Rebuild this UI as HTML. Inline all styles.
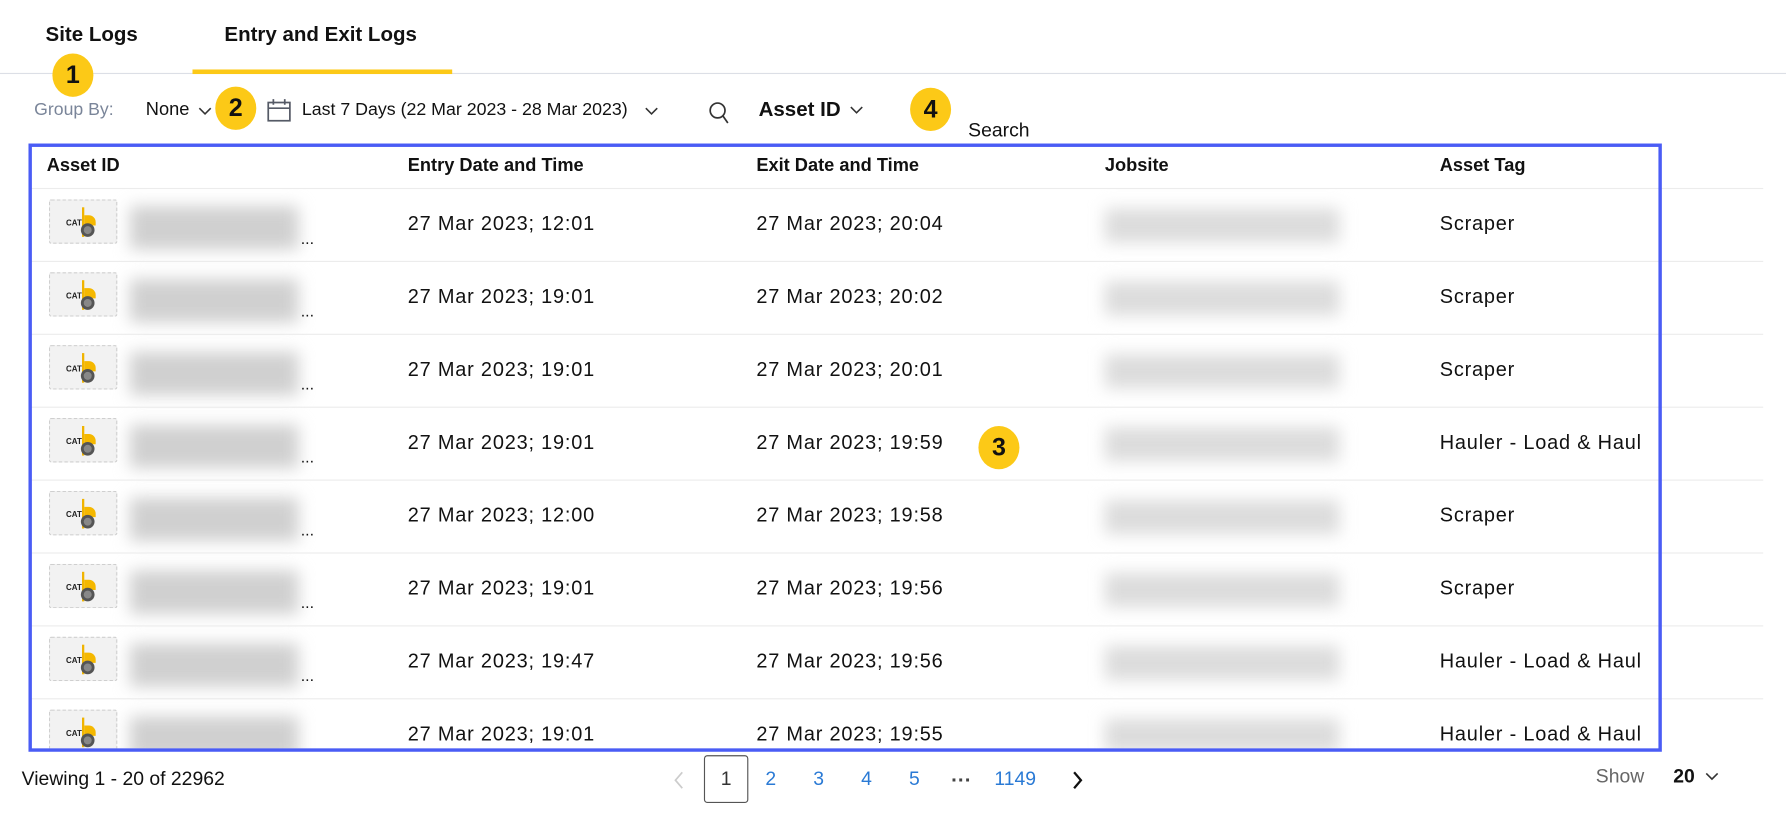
<!DOCTYPE html>
<html><head><meta charset="utf-8"><style>
*{margin:0;padding:0;box-sizing:border-box}
html,body{width:1786px;height:822px;overflow:hidden;background:#fff}
#w{position:absolute;left:0;top:0;width:1568px;height:722px;transform:scale(1.13903);transform-origin:0 0;font-family:"Liberation Sans",sans-serif;color:#111}
.a{position:absolute;white-space:nowrap}
.b{font-weight:bold}
.badge{position:absolute;width:36px;height:38px;border-radius:50%;background:#fcc917;font-weight:bold;font-size:22px;text-align:center;line-height:38px;color:#111}
.hd{font-size:16px;font-weight:bold;top:137px}
.sep{position:absolute;left:27px;width:1521px;height:1px;background:#ececec}
.cell{font-size:17.5px;letter-spacing:0.7px}
.thumb{position:absolute;left:43px;width:60px;height:39px;border:1px dashed #cfcfcf;background:#f2f2f2;border-radius:2px}
.blur{position:absolute;background:#d0d0d0;filter:blur(7px)}
.pg{position:absolute;top:674px;font-size:17px;color:#2a7ad5}
</style></head><body><div id="w">
<div class="a b" style="left:40px;top:20px;font-size:18px">Site Logs</div>
<div class="a b" style="left:197px;top:20px;font-size:18px">Entry and Exit Logs</div>
<div class="a" style="left:0;top:64px;width:1568px;height:1px;background:#dcdfe6"></div>
<div class="a" style="left:169px;top:61px;width:228px;height:4px;background:#fcc917"></div>
<div class="a" style="left:30px;top:88px;font-size:15.5px;color:#7a8599">Group By:</div>
<div class="a" style="left:128px;top:88px;font-size:16px">None</div>
<svg class="a" style="left:174px;top:94px" width="12" height="8"><path d="M1 1l5 5 5-5" fill="none" stroke="#333" stroke-width="1.4"/></svg>
<svg class="a" style="left:234px;top:86px" width="22" height="22"><rect x="1.5" y="4" width="19" height="16" fill="none" stroke="#555a66" stroke-width="1.5"/><line x1="1.5" y1="9" x2="20.5" y2="9" stroke="#555a66" stroke-width="1.5"/><line x1="6" y1="1" x2="6" y2="6" stroke="#555a66" stroke-width="1.5"/><line x1="16" y1="1" x2="16" y2="6" stroke="#555a66" stroke-width="1.5"/></svg>
<div class="a" style="left:265px;top:88px;font-size:15.6px">Last 7 Days (22 Mar 2023 - 28 Mar 2023)</div>
<svg class="a" style="left:566px;top:94px" width="12" height="8"><path d="M1 1l5 5 5-5" fill="none" stroke="#333" stroke-width="1.4"/></svg>
<svg class="a" style="left:622px;top:89px" width="20" height="22"><circle cx="8" cy="8" r="6.5" fill="none" stroke="#333" stroke-width="1.5"/><line x1="12.5" y1="12.5" x2="17" y2="19" stroke="#333" stroke-width="1.5"/></svg>
<div class="a b" style="left:666px;top:86px;font-size:18px">Asset ID</div>
<svg class="a" style="left:746px;top:93px" width="12" height="8"><path d="M1 1l5 5 5-5" fill="none" stroke="#333" stroke-width="1.4"/></svg>
<div class="a" style="left:850px;top:105px;font-size:17px">Search</div>
<div class="badge" style="left:46px;top:47px">1</div>
<div class="badge" style="left:189px;top:76px">2</div>
<div class="badge" style="left:799px;top:77px">4</div>
<div class="badge" style="left:859px;top:374px">3</div>

<div class="a hd" style="left:41px">Asset ID</div>
<div class="a hd" style="left:358px">Entry Date and Time</div>
<div class="a hd" style="left:664px">Exit Date and Time</div>
<div class="a hd" style="left:970px">Jobsite</div>
<div class="a hd" style="left:1264px">Asset Tag</div>
<div class="sep" style="top:165px"></div>

<div style="position:absolute;left:0;top:0;width:1568px;height:657px;overflow:hidden"><div id="rows"></div></div>
<script>
var d=[["12:01","20:04","Scraper"],["19:01","20:02","Scraper"],["19:01","20:01","Scraper"],["19:01","19:59","Hauler - Load &amp; Haul"],["12:00","19:58","Scraper"],["19:01","19:56","Scraper"],["19:47","19:56","Hauler - Load &amp; Haul"],["19:01","19:55","Hauler - Load &amp; Haul"]];
var h="";
d.forEach(function(r,i){var c=197+64*i;
h+='<div class="thumb" style="top:'+(c-22)+'px"><svg width="58" height="37"><text x="14" y="22" font-size="7" font-weight="bold" font-family="Liberation Sans" fill="#222">CAT</text><rect x="28" y="6" width="2" height="26" fill="#f0b400"/><path d="M30 13h4a6 6 0 0 1 6 6v3h-10z" fill="#f5b800"/><circle cx="33" cy="26" r="6" fill="#555"/><circle cx="33" cy="26" r="3.5" fill="#888"/></svg></div>';
h+='<div class="blur" style="left:114px;top:'+(c-16)+'px;width:148px;height:38px"></div>';
h+='<div class="a" style="left:264px;top:'+(c+4)+'px;font-size:14px">...</div>';
h+='<div class="a cell" style="left:358px;top:'+(c-11)+'px">27 Mar 2023; '+r[0]+'</div>';
h+='<div class="a cell" style="left:664px;top:'+(c-11)+'px">27 Mar 2023; '+r[1]+'</div>';
h+='<div class="blur" style="left:970px;top:'+(c-14)+'px;width:206px;height:30px;background:#dcdcdc"></div>';
h+='<div class="a cell" style="left:1264px;top:'+(c-11)+'px">'+r[2]+'</div>';
if(i<7)h+='<div class="sep" style="top:'+(c+32)+'px"></div>';});
document.getElementById("rows").innerHTML=h;
</script>
<div class="a" style="left:25px;top:126px;width:1434px;height:534px;border:3px solid #4a5cf5"></div>

<div class="a" style="left:19px;top:674px;font-size:17px">Viewing 1 - 20 of 22962</div>
<svg class="a" style="left:590px;top:676px" width="12" height="18"><path d="M9 2l-6 7 6 7" fill="none" stroke="#ccc" stroke-width="1.5"/></svg>
<div class="a" style="left:618px;top:663px;width:39px;height:42px;border:1px solid #555;border-radius:3px;text-align:center;line-height:40px;font-size:17px;color:#333">1</div>
<div class="pg" style="left:672px">2</div>
<div class="pg" style="left:714px">3</div>
<div class="pg" style="left:756px">4</div>
<div class="pg" style="left:798px">5</div>
<div class="a b" style="left:835px;top:670px;font-size:18px;color:#444;letter-spacing:1px">...</div>
<div class="pg" style="left:873px">1149</div>
<svg class="a" style="left:940px;top:676px" width="12" height="18"><path d="M3 2l6 7-6 7" fill="none" stroke="#111" stroke-width="2"/></svg>
<div class="a" style="left:1401px;top:672px;font-size:17px;color:#666">Show</div>
<div class="a b" style="left:1469px;top:672px;font-size:17px">20</div>
<svg class="a" style="left:1497px;top:678px" width="12" height="8"><path d="M1 1l5 5 5-5" fill="none" stroke="#333" stroke-width="1.4"/></svg>
</div></body></html>
